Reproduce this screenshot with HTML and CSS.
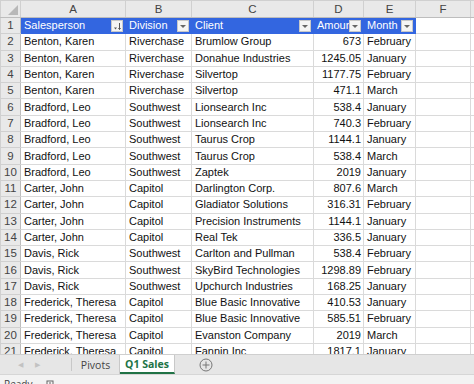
FILE: index.html
```html
<!DOCTYPE html>
<html lang="en">
<head>
    <meta charset="UTF-8">
    <title>Q1 Sales - Excel</title>
    <link rel="stylesheet" href="styles.css">
</head>
<body>
<div class="app">

    <!-- Worksheet grid -->
    <div class="sheet">
        <table class="grid">
            <colgroup>
                <col class="c-row"><col class="c-a"><col class="c-b"><col class="c-c">
                <col class="c-d"><col class="c-e"><col class="c-f"><col class="c-g">
            </colgroup>
            <thead>
                <tr>
                    <th class="corner"><span class="corner-mark"></span></th>
                    <th>A</th><th>B</th><th>C</th><th>D</th><th>E</th><th>F</th><th></th>
                </tr>
            </thead>
            <tbody>
                <tr class="table-head">
                    <th>1</th>
                    <td>Salesperson<span class="filter sorted"><svg width="9" height="9" viewBox="0 0 9 9"><path d="M1 5.5h3l-1.5 2z" fill="#555"/><path d="M6.5 1v6.5" stroke="#555" stroke-width="1"/><path d="M5.3 6l1.2 1.5 1.2-1.5" fill="none" stroke="#555" stroke-width="0.9"/></svg></span></td>
                    <td>Division<span class="filter"></span></td>
                    <td>Client<span class="filter"></span></td>
                    <td>Amount<span class="filter"></span></td>
                    <td>Month<span class="filter"></span></td>
                    <td class="plain"></td><td class="plain"></td>
                </tr>
                <tr><th>2</th><td>Benton, Karen</td><td>Riverchase</td><td>Brumlow Group</td><td class="num">673</td><td>February</td><td></td><td></td></tr>
                <tr><th>3</th><td>Benton, Karen</td><td>Riverchase</td><td>Donahue Industries</td><td class="num">1245.05</td><td>January</td><td></td><td></td></tr>
                <tr><th>4</th><td>Benton, Karen</td><td>Riverchase</td><td>Silvertop</td><td class="num">1177.75</td><td>February</td><td></td><td></td></tr>
                <tr><th>5</th><td>Benton, Karen</td><td>Riverchase</td><td>Silvertop</td><td class="num">471.1</td><td>March</td><td></td><td></td></tr>
                <tr><th>6</th><td>Bradford, Leo</td><td>Southwest</td><td>Lionsearch Inc</td><td class="num">538.4</td><td>January</td><td></td><td></td></tr>
                <tr><th>7</th><td>Bradford, Leo</td><td>Southwest</td><td>Lionsearch Inc</td><td class="num">740.3</td><td>February</td><td></td><td></td></tr>
                <tr><th>8</th><td>Bradford, Leo</td><td>Southwest</td><td>Taurus Crop</td><td class="num">1144.1</td><td>January</td><td></td><td></td></tr>
                <tr><th>9</th><td>Bradford, Leo</td><td>Southwest</td><td>Taurus Crop</td><td class="num">538.4</td><td>March</td><td></td><td></td></tr>
                <tr><th>10</th><td>Bradford, Leo</td><td>Southwest</td><td>Zaptek</td><td class="num">2019</td><td>January</td><td></td><td></td></tr>
                <tr><th>11</th><td>Carter, John</td><td>Capitol</td><td>Darlington Corp.</td><td class="num">807.6</td><td>March</td><td></td><td></td></tr>
                <tr><th>12</th><td>Carter, John</td><td>Capitol</td><td>Gladiator Solutions</td><td class="num">316.31</td><td>February</td><td></td><td></td></tr>
                <tr><th>13</th><td>Carter, John</td><td>Capitol</td><td>Precision Instruments</td><td class="num">1144.1</td><td>January</td><td></td><td></td></tr>
                <tr><th>14</th><td>Carter, John</td><td>Capitol</td><td>Real Tek</td><td class="num">336.5</td><td>January</td><td></td><td></td></tr>
                <tr><th>15</th><td>Davis, Rick</td><td>Southwest</td><td>Carlton and Pullman</td><td class="num">538.4</td><td>February</td><td></td><td></td></tr>
                <tr><th>16</th><td>Davis, Rick</td><td>Southwest</td><td>SkyBird Technologies</td><td class="num">1298.89</td><td>February</td><td></td><td></td></tr>
                <tr><th>17</th><td>Davis, Rick</td><td>Southwest</td><td>Upchurch Industries</td><td class="num">168.25</td><td>January</td><td></td><td></td></tr>
                <tr><th>18</th><td>Frederick, Theresa</td><td>Capitol</td><td>Blue Basic Innovative</td><td class="num">410.53</td><td>January</td><td></td><td></td></tr>
                <tr><th>19</th><td>Frederick, Theresa</td><td>Capitol</td><td>Blue Basic Innovative</td><td class="num">585.51</td><td>February</td><td></td><td></td></tr>
                <tr><th>20</th><td>Frederick, Theresa</td><td>Capitol</td><td>Evanston Company</td><td class="num">2019</td><td>March</td><td></td><td></td></tr>
                <tr><th>21</th><td>Frederick, Theresa</td><td>Capitol</td><td>Fannin Inc</td><td class="num">1817.1</td><td>January</td><td></td><td></td></tr>
            </tbody>
        </table>
    </div>

    <!-- Sheet tabs -->
    <div class="tabs">
        <div class="tab-nav">
            <span class="nav-arrow">&#9664;</span>
            <span class="nav-arrow">&#9654;</span>
        </div>
        <div class="tab">Pivots</div>
        <div class="tab active">Q1 Sales</div>
        <div class="add-sheet">
            <svg width="14" height="14" viewBox="0 0 14 14"><circle cx="7" cy="7" r="6" fill="none" stroke="#777" stroke-width="1"/><path d="M7 3.5v7M3.5 7h7" stroke="#777" stroke-width="1"/></svg>
        </div>
    </div>

    <!-- Status bar -->
    <div class="status">
        <span>Ready</span>
        <svg class="macro" width="10" height="10" viewBox="0 0 10 10"><rect x="1" y="2" width="6" height="7" fill="none" stroke="#666"/><path d="M3 4h2M3 6h2" stroke="#666"/></svg>
    </div>

</div>
</body>
</html>
```

FILE: styles.css
```css
body {
    margin: 0;
    font-family: "Liberation Sans", Arial, sans-serif;
    font-size: 11px;
    color: #111;
    background: #fff;
}

.app {
    width: 474px;
    height: 384px;
    display: flex;
    flex-direction: column;
    overflow: hidden;
}

/* Worksheet grid */
.sheet {
    height: 354px;
    flex: none;
    overflow: hidden;
}

.grid {
    border-collapse: collapse;
    table-layout: fixed;
    width: 500px;
}

.c-row { width: 20px; }
.c-a { width: 105px; }
.c-b { width: 66px; }
.c-c { width: 122px; }
.c-d { width: 50px; }
.c-e { width: 52px; }
.c-f { width: 55px; }
.c-g { width: 30px; }

.grid td,
.grid th {
    border: 1px solid #dadada;
    padding: 0 2px 0 3px;
    white-space: nowrap;
    overflow: hidden;
    line-height: 13px;
    text-align: left;
    font-weight: normal;
}

.grid thead tr {
    height: 17px;
}

.grid thead th {
    background: #e9e9e9;
    color: #444;
    text-align: center;
    border-color: #d0d0d0;
    border-bottom-color: #bdbdbd;
    padding: 0;
    font-size: 11.5px;
}

.grid tbody tr {
    height: 16.3px;
}

.grid tbody th {
    background: #e9e9e9;
    color: #444;
    text-align: center;
    padding: 0;
    border-color: #d0d0d0;
    border-right-color: #bdbdbd;
    font-size: 11.5px;
}

.corner {
    position: relative;
}

.corner-mark {
    position: absolute;
    right: 2px;
    bottom: 2px;
    width: 0;
    height: 0;
    border-left: 10px solid transparent;
    border-bottom: 10px solid #b8b8b8;
}

.num {
    text-align: right !important;
}

/* Excel table header row */
.table-head td {
    background: #3366e0;
    color: #fff;
    border-color: #3366e0;
    position: relative;
    padding-right: 14px;
}

.table-head td.plain {
    background: #fff;
    border-color: #dadada;
}

.filter {
    position: absolute;
    right: 2px;
    top: 2px;
    width: 10px;
    height: 10px;
    background: #f4f4f4;
    border: 1px solid #c8c8c8;
}

.filter::after {
    content: "";
    position: absolute;
    left: 2px;
    top: 4px;
    border-left: 3px solid transparent;
    border-right: 3px solid transparent;
    border-top: 3px solid #666;
}

.filter.sorted::after {
    display: none;
}

.filter svg {
    display: block;
    margin: 0.5px;
}

/* Sheet tabs */
.tabs {
    height: 19px;
    flex: none;
    display: flex;
    align-items: stretch;
    background: #e6e6e6;
    border-top: 1px solid #cfcfcf;
    font-family: "Open Sans", "Noto Sans", sans-serif;
    font-size: 10.5px;
    color: #444;
}

.tab-nav {
    width: 72px;
    display: flex;
    align-items: center;
    gap: 12px;
    padding-left: 18px;
    box-sizing: border-box;
    border-right: 1px solid #c8c8c8;
    margin: 3px 0;
}

.nav-arrow {
    color: #c2c2c2;
    font-size: 7px;
}

.tab {
    width: 47px;
    display: flex;
    align-items: center;
    justify-content: center;
    border-right: 1px solid #c8c8c8;
}

.tab.active {
    width: 55px;
    background: #fff;
    color: #217346;
    font-weight: bold;
    border-bottom: 2px solid #217346;
    box-sizing: border-box;
}

.add-sheet {
    display: flex;
    align-items: center;
    padding-left: 24px;
}

/* Status bar */
.status {
    flex: 1;
    background: #f3f3f3;
    border-top: 1px solid #d6d6d6;
    display: flex;
    align-items: flex-start;
    gap: 14px;
    padding: 3px 0 0 4px;
    font-family: "Open Sans", "Noto Sans", sans-serif;
    font-size: 10px;
    line-height: 12px;
    color: #444;
}

.macro {
    margin-top: 1px;
}
```
